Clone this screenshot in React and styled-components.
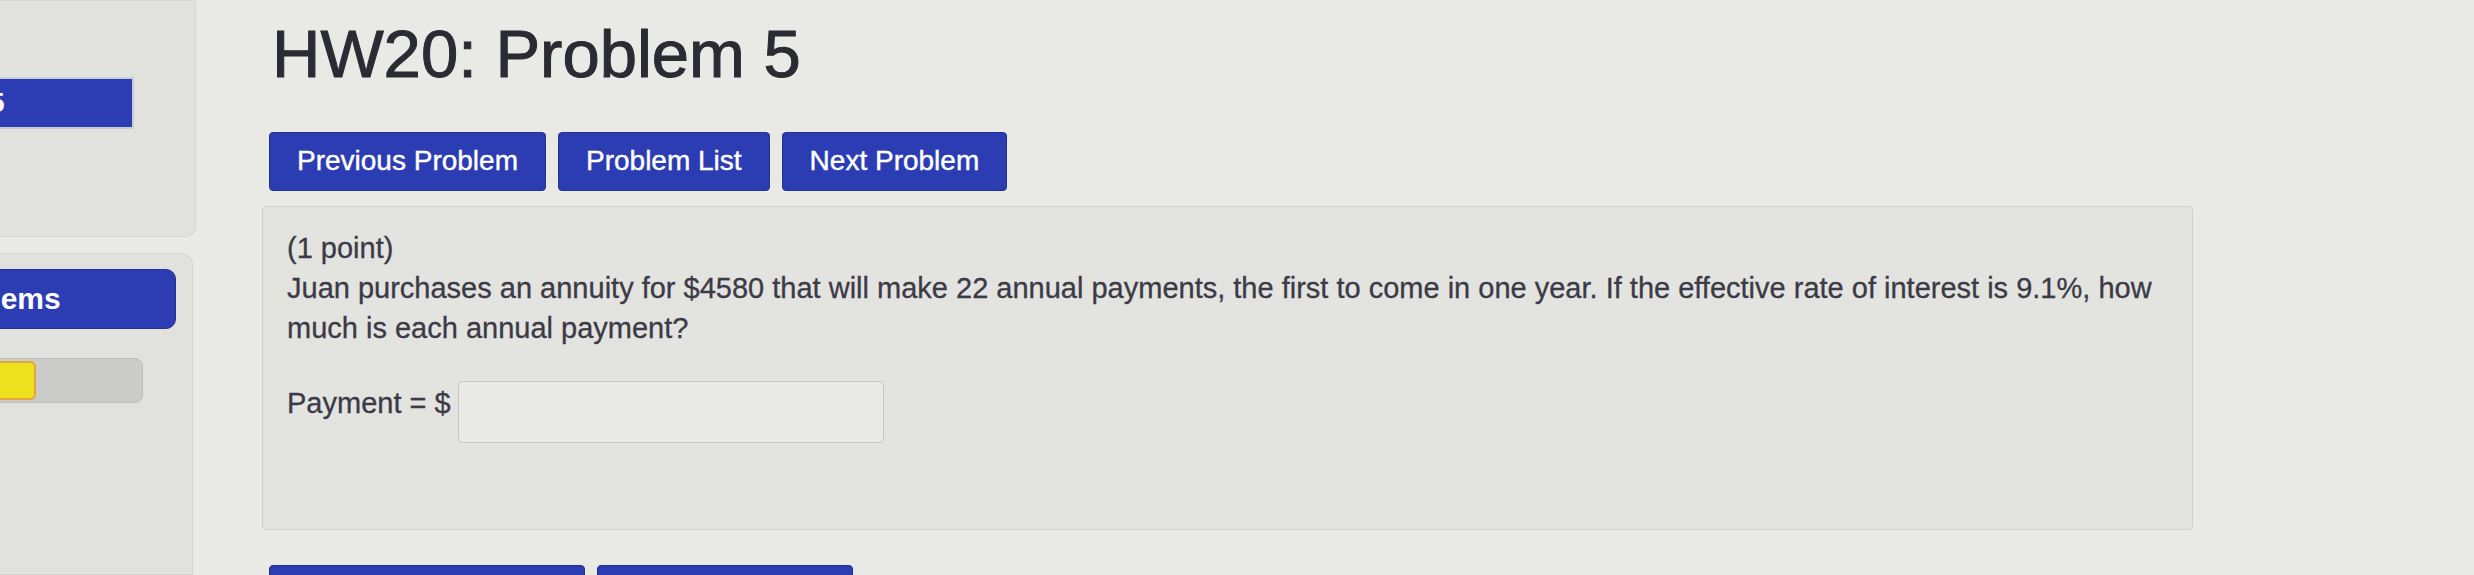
import React from "react";
import styled, { createGlobalStyle } from "styled-components";

const GlobalStyle = createGlobalStyle`
  html, body {
    margin: 0;
    padding: 0;
    background: #e9e9e6;
  }
  body {
    width: 2474px;
    height: 575px;
    overflow: hidden;
    font-family: "Liberation Sans", Arial, Helvetica, sans-serif;
    color: #3b3a46;
  }
`;

const Page = styled.div`
  display: flex;
  height: 575px;
  overflow: hidden;
`;

const Sidebar = styled.aside`
  width: 196px;
  flex-shrink: 0;
  display: flex;
  flex-direction: column;
  gap: 16px;
  overflow: hidden;
`;

const Panel = styled.div`
  box-sizing: border-box;
  background: #e1e1de;
  border: 1px solid #d5d5d2;
  border-left: none;
  width: ${(p) => p.$width}px;
  height: ${(p) => (p.$height ? `${p.$height}px` : "auto")};
  flex: ${(p) => (p.$grow ? 1 : "none")};
  border-radius: ${(p) => p.$radius};
  padding-top: ${(p) => p.$padTop}px;
  display: flex;
  flex-direction: column;
`;

const SetBar = styled.div`
  box-sizing: border-box;
  margin-left: -40px;
  width: 174px;
  height: 52px;
  padding-left: 29px;
  display: flex;
  align-items: center;
  background: #2c3db4;
  border: 2px solid #c9cbd6;
  border-left: none;
  color: #fff;
  font-weight: bold;
  font-size: 28px;
`;

const NavButton = styled.div`
  box-sizing: border-box;
  margin-left: -100px;
  width: 276px;
  height: 60px;
  padding-left: 23px;
  display: flex;
  align-items: center;
  background: #2c3db4;
  border: 1px solid #24338f;
  border-radius: 10px;
  color: #fff;
  font-weight: bold;
  font-size: 30px;
`;

const Progress = styled.div`
  box-sizing: border-box;
  margin-top: 29px;
  margin-left: -20px;
  width: 163px;
  height: 45px;
  background: #cbcbc9;
  border: 1px solid #bdbdbb;
  border-radius: 8px;
  display: flex;
  align-items: stretch;
  padding: 2px;
`;

const ProgressFill = styled.div`
  box-sizing: border-box;
  background: #ece11c;
  border: 2px solid #e3a63a;
  border-radius: 6px;
`;

const Main = styled.main`
  padding-left: 66px;
  display: flex;
  flex-direction: column;
  align-items: flex-start;
`;

const Title = styled.h1`
  margin: 17px 0 0 10px;
  font-size: 67px;
  line-height: 1.1;
  font-weight: normal;
  color: #2b2b33;
  -webkit-text-stroke: 1px #2b2b33;
`;

const ButtonRow = styled.div`
  display: flex;
  gap: 12px;
  margin-left: 7px;
  margin-top: ${(p) => p.$top}px;
`;

const NavBtn = styled.button`
  box-sizing: border-box;
  height: 59px;
  width: ${(p) => (p.$width ? `${p.$width}px` : "auto")};
  padding: 0 27px;
  background: #2c3db4;
  border: 1px solid #22318c;
  border-radius: 4px;
  color: #fff;
  font-family: "Liberation Sans", Arial, Helvetica, sans-serif;
  font-size: 28px;
  line-height: 1;
  -webkit-text-stroke: 0.4px #fff;
  flex-shrink: 0;
`;

const ProblemBox = styled.section`
  box-sizing: border-box;
  margin-top: 15px;
  width: 1931px;
  padding: 21px 24px 86px;
  background: #e3e3e0;
  border: 1px solid #cfcfcb;
  border-radius: 4px;
  font-size: 29px;
  line-height: 40px;
  -webkit-text-stroke: 0.3px #3b3a46;
`;

const Points = styled.div``;

const Question = styled.p`
  margin: 0;
`;

const AnswerRow = styled.div`
  display: flex;
  align-items: flex-start;
  gap: 7px;
  margin-top: 33px;
`;

const Label = styled.span`
  margin-top: 2px;
`;

const AnswerInput = styled.div`
  box-sizing: border-box;
  width: 426px;
  height: 62px;
  background: #e9e9e6;
  border: 1px solid #c6c6c3;
  border-radius: 4px;
`;

export default function App() {
  return (
    <>
      <GlobalStyle />
      <Page>
        <Sidebar>
          <Panel $width={196} $height={237} $padTop={76} $radius="0 0 10px 0">
            <SetBar>5</SetBar>
          </Panel>
          <Panel $width={193} $grow $padTop={15} $radius="0 12px 0 0">
            <NavButton>Problems</NavButton>
            <Progress>
              <ProgressFill style={{ width: 53 }} />
            </Progress>
          </Panel>
        </Sidebar>
        <Main>
          <Title>HW20: Problem 5</Title>
          <ButtonRow $top={41}>
            <NavBtn>Previous Problem</NavBtn>
            <NavBtn>Problem List</NavBtn>
            <NavBtn>Next Problem</NavBtn>
          </ButtonRow>
          <ProblemBox>
            <Points>(1 point)</Points>
            <Question>
              Juan purchases an annuity for $4580 that will make 22 annual
              payments, the first to come in one year. If the effective rate of
              interest is 9.1%, how much is each annual payment?
            </Question>
            <AnswerRow>
              <Label>Payment = $</Label>
              <AnswerInput />
            </AnswerRow>
          </ProblemBox>
          <ButtonRow $top={35}>
            <NavBtn $width={316} aria-label="Preview My Answers" />
            <NavBtn $width={256} aria-label="Submit Answers" />
          </ButtonRow>
        </Main>
      </Page>
    </>
  );
}
